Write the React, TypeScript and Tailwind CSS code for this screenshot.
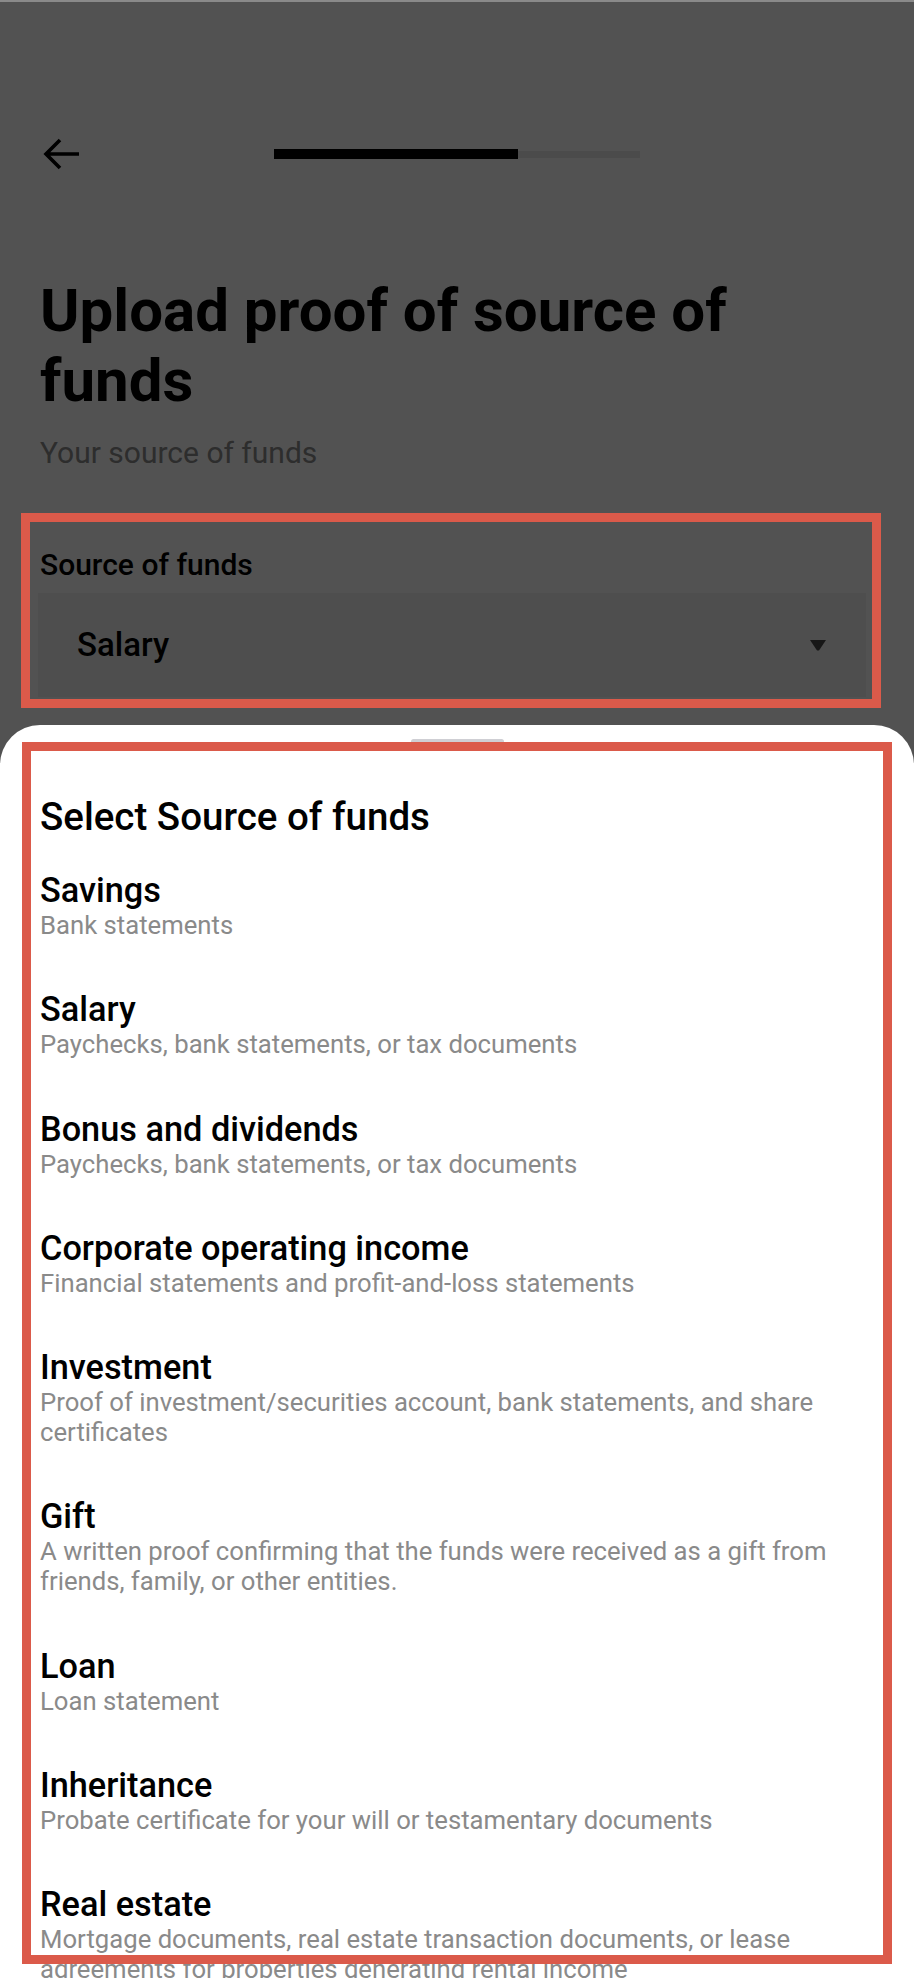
import React from "react";

const sources: [string, string][] = [
  ["Savings", "Bank statements"],
  ["Salary", "Paychecks, bank statements, or tax documents"],
  ["Bonus and dividends", "Paychecks, bank statements, or tax documents"],
  ["Corporate operating income", "Financial statements and profit-and-loss statements"],
  ["Investment", "Proof of investment/securities account, bank statements, and share certificates"],
  ["Gift", "A written proof confirming that the funds were received as a gift from friends, family, or other entities."],
  ["Loan", "Loan statement"],
  ["Inheritance", "Probate certificate for your will or testamentary documents"],
  ["Real estate", "Mortgage documents, real estate transaction documents, or lease agreements for properties generating rental income"],
];

function BackArrow() {
  return (
    <svg width="38" height="32" viewBox="0 0 38 32" fill="none">
      <path d="M37 16H4M18 2L4 16L18 30" stroke="#000" strokeWidth="3.6" strokeLinecap="butt" strokeLinejoin="miter" />
    </svg>
  );
}

export default function App() {
  return (
    <div className="relative w-[914px] h-[1978px] overflow-hidden bg-white font-['Roboto',sans-serif] text-black">
      {/* page behind the sheet */}
      <div className="pt-[138px]">
        <div className="flex items-center h-[32px] pl-[42px]">
          <div className="w-[232px]">
            <BackArrow />
          </div>
          <div className="flex items-center">
            <div className="w-[244px] h-[10px] bg-black" />
            <div className="w-[122px] h-[7px] bg-[#e8e8e8]" />
          </div>
        </div>

        <h1 className="mt-[106px] pl-[40px] w-[850px] text-[60px] leading-[70px] font-bold">
          Upload proof of source of funds
        </h1>
        <p className="mt-[20px] pl-[40px] text-[30px] leading-[34px] text-[#8c8c8c]">Your source of funds</p>

        <div className="mt-[79px] pl-[40px] text-[30px] leading-[32px] font-medium">Source of funds</div>
        <div className="mt-[12px] ml-[38px] w-[828px] h-[104px] bg-[#f2f2f2] flex items-center justify-between pl-[39px] pr-[40px]">
          <span className="text-[33px] font-medium">Salary</span>
          <svg width="16" height="11" viewBox="0 0 16 11">
            <path d="M0 0H16L9 10.5H7Z" fill="#4a4a4a" />
          </svg>
        </div>
      </div>

      {/* scrim */}
      <div className="absolute inset-0 bg-[rgba(0,0,0,0.68)]" />
      <div className="absolute top-0 inset-x-0 h-[2px] bg-[#8a8a8a]" />

      {/* bottom sheet */}
      <div className="absolute inset-x-0 top-[725px] bottom-0 bg-white rounded-t-[40px] px-[40px] pt-[14px]">
        <div className="mx-auto w-[93px] h-[5px] rounded-full bg-[#cfcfd4]" />
        <h2 className="mt-[51px] text-[38.5px] leading-[44px] font-medium">Select Source of funds</h2>
        <div className="mt-[31px] flex flex-col gap-[49.3px]">
          {sources.map(([title, desc]) => (
            <div key={title}>
              <div className="text-[34.3px] leading-[40px] font-medium">{title}</div>
              <div className="text-[25.7px] leading-[30px] text-[#8a8a8a]">{desc}</div>
            </div>
          ))}
        </div>
      </div>

      {/* annotation outlines */}
      <div className="absolute left-[21px] top-[513px] w-[860px] h-[195px] border-[9px] border-[#db5a4a]" />
      <div className="absolute left-[22px] top-[742px] w-[870px] h-[1222px] border-[9px] border-[#db5a4a]" />
    </div>
  );
}
